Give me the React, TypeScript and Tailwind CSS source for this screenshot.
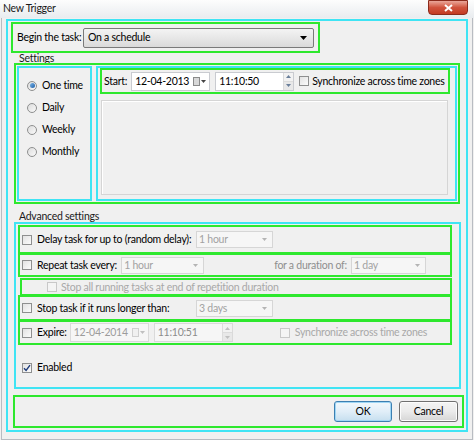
import * as React from 'react'

const GREEN = 'border-[#2ee82e]'
const CYAN = 'border-[#3fe4f4]'

function Check({ checked = false, disabled = false }: { checked?: boolean; disabled?: boolean }) {
  return (
    <div
      className={`w-[10px] h-[10px] shrink-0 border flex items-center justify-center ${
        disabled ? 'border-[#c8c8c8] bg-[#f4f4f4]' : 'border-[#8e8f8f] bg-gradient-to-br from-[#e2e2e2] to-[#fbfbfb]'
      }`}
    >
      {checked && (
        <svg width="8" height="8" viewBox="0 0 8 8">
          <path d="M1 4.2 L3.1 6.5 L7 1.2" fill="none" stroke="#1d3a7a" strokeWidth="1.4" />
        </svg>
      )}
    </div>
  )
}

function Radio({ checked = false }: { checked?: boolean }) {
  return (
    <div className="w-[10px] h-[10px] shrink-0 rounded-full border border-[#8e8f8f] bg-gradient-to-br from-[#dcdcdc] to-[#fafafa] flex items-center justify-center">
      {checked && <div className="w-[5px] h-[5px] rounded-full bg-gradient-to-br from-[#7ab6e8] to-[#1d5fa8]" />}
    </div>
  )
}

function DisabledSelect({ value, w }: { value: string; w: string }) {
  return (
    <div className={`${w} h-[17px] border border-[#d6d6d6] bg-[#f6f6f6] flex items-center pl-[2px] text-[#a2a2a2]`}>
      <span>{value}</span>
      <svg className="ml-auto mr-[5px]" width="5" height="3" viewBox="0 0 5 3">
        <path d="M0 0 H5 L2.5 3 Z" fill="#b4b4b4" />
      </svg>
    </div>
  )
}

function DateBox({ value, disabled = false }: { value: string; disabled?: boolean }) {
  return (
    <div
      className={`w-[79px] h-[19px] shrink-0 border flex items-center pl-[3px] ${
        disabled ? 'border-[#dadada] bg-[#f6f6f6] text-[#9c9c9c]' : 'border-[#c9cbd0] bg-white text-black'
      }`}
    >
      <span>{value}</span>
      <div className="ml-auto mr-[3px] flex items-center gap-[1px]">
        <div className={`w-[7px] h-[9px] border ${disabled ? 'border-[#cfcfcf] bg-[#f0f0f0]' : 'border-[#8a8a8a] bg-[#d8d8d8]'}`} />
        <svg width="5" height="3" viewBox="0 0 5 3">
          <path d="M0 0 H5 L2.5 3 Z" fill={disabled ? '#c0c0c0' : '#444'} />
        </svg>
      </div>
    </div>
  )
}

function TimeBox({ value, disabled = false }: { value: string; disabled?: boolean }) {
  return (
    <div
      className={`w-[79px] h-[19px] shrink-0 border flex items-center pl-[3px] ${
        disabled ? 'border-[#dadada] bg-[#f6f6f6] text-[#8c8c8c]' : 'border-[#c9cbd0] bg-white text-black'
      }`}
    >
      <span>{value}</span>
      <div className="ml-auto h-full w-[10px] border-l border-[#dcdcdc] flex flex-col">
        <div className="flex-1 flex items-center justify-center bg-[#f2f2f2]">
          <svg width="5" height="3" viewBox="0 0 5 3">
            <path d="M0 3 H5 L2.5 0 Z" fill={disabled ? '#c0c0c0' : '#6a7f9a'} />
          </svg>
        </div>
        <div className="flex-1 flex items-center justify-center bg-[#e8e8e8] border-t border-[#dcdcdc]">
          <svg width="5" height="3" viewBox="0 0 5 3">
            <path d="M0 0 H5 L2.5 3 Z" fill={disabled ? '#c0c0c0' : '#6a7f9a'} />
          </svg>
        </div>
      </div>
    </div>
  )
}

export default function App() {
  return (
    <div className="w-[474px] h-[440px] bg-[#f0f0f0] overflow-hidden flex flex-col whitespace-nowrap text-[10.5px] tracking-[-0.25px] leading-[13px] text-black font-['Lato',sans-serif]">
      {/* title bar */}
      <div className="h-[18px] shrink-0 flex items-start bg-gradient-to-b from-[#fdfdfd] to-[#e9ecef]">
        <span className="ml-[3px] mt-[2px] text-[#1a1a1a]">New Trigger</span>
        <div className="ml-auto mr-[6px] w-[40px] h-[15px] rounded-b-[4px] border border-[#8b2b1c] bg-gradient-to-b from-[#e9a699] via-[#d0533d] to-[#c43a22] flex items-center justify-center">
          <svg width="9" height="8" viewBox="0 0 9 8">
            <path d="M1 1 L8 7 M8 1 L1 7" stroke="white" strokeWidth="2" />
          </svg>
        </div>
      </div>

      <div className="flex-1 px-[3px] pb-[6px] border-l border-r border-b border-[#b8bcc2] mx-[1px] flex flex-col">
        <div className={`mt-[1px] ml-[1px] w-[462px] h-[413px] border-2 ${CYAN} flex flex-col`}>
          {/* begin the task */}
          <div className={`ml-[3px] mt-[1px] w-[309px] h-[31px] shrink-0 border-2 ${GREEN} flex items-center pl-[4px]`}>
            <span>Begin the task:</span>
            <div className="ml-auto mr-[4px] w-[231px] h-[20px] rounded-[2px] border border-[#7a7a7a] bg-gradient-to-b from-[#f4f4f4] to-[#dadada] flex items-center pl-[4px]">
              <span>On a schedule</span>
              <svg className="ml-auto mr-[6px]" width="7" height="4" viewBox="0 0 7 4">
                <path d="M0 0 H7 L3.5 4 Z" fill="#000" />
              </svg>
            </div>
          </div>

          <div className="ml-[11px] h-[9px] leading-[9px] mt-[1px] text-[#1a1a1a]">Settings</div>

          {/* settings */}
          <div className={`ml-[6px] w-[446px] h-[141px] shrink-0 border-2 ${GREEN} p-[1px] flex gap-[4px]`}>
            <div className={`w-[75px] h-full border-2 ${CYAN} flex flex-col pl-[8px] pt-[12px] gap-[11px]`}>
              {['One time', 'Daily', 'Weekly', 'Monthly'].map((t, i) => (
                <div key={t} className="flex items-center gap-[5px] h-[11px]">
                  <Radio checked={i === 0} />
                  <span>{t}</span>
                </div>
              ))}
            </div>
            <div className={`flex-1 h-full border-2 ${CYAN} flex flex-col`}>
              <div className={`ml-[2px] w-[350px] h-[26px] border-2 ${GREEN} flex items-center pl-[2px]`}>
                <span>Start:</span>
                <div className="ml-[4px]">
                  <DateBox value="12-04-2013" />
                </div>
                <div className="ml-[5px]">
                  <TimeBox value="11:10:50" />
                </div>
                <div className="ml-[5px]">
                  <Check />
                </div>
                <span className="ml-[3px]">Synchronize across time zones</span>
              </div>
              <div className="ml-[3px] mt-[6px] w-[347px] h-[95px] border border-[#d5d5d5] shadow-[inset_1px_1px_0_#ffffff]" />
            </div>
          </div>

          <div className="ml-[11px] h-[11px] leading-[11px] mt-[7px] text-[#1a1a1a]">Advanced settings</div>

          {/* advanced */}
          <div className={`ml-[6px] w-[447px] h-[167px] shrink-0 border-2 ${CYAN} flex flex-col pt-[1px]`}>
            <div className={`ml-[2px] w-[434px] h-[29px] border-2 ${GREEN} flex items-center pl-[2px]`}>
              <Check />
              <span className="ml-[5px]">Delay task for up to (random delay):</span>
              <div className="ml-auto mr-[177px]">
                <DisabledSelect value="1 hour" w="w-[77px]" />
              </div>
            </div>
            <div className={`ml-[2px] -mt-[1px] w-[434px] h-[24px] border-2 ${GREEN} flex items-center pl-[2px]`}>
              <Check />
              <span className="ml-[5px]">Repeat task every:</span>
              <div className="ml-auto mr-[247px]">
                <DisabledSelect value="1 hour" w="w-[83px]" />
              </div>
              <span className="text-[#8e8e8e] -ml-[177px]">for a duration of:</span>
              <div className="ml-auto mr-[24px]">
                <DisabledSelect value="1 day" w="w-[75px]" />
              </div>
            </div>
            <div className={`ml-[4px] mt-[1px] w-[432px] h-[18px] border-2 ${GREEN} flex items-center pl-[25px]`}>
              <Check disabled />
              <span className="ml-[4px] text-[#a8a8a8]">Stop all running tasks at end of repetition duration</span>
            </div>
            <div className={`ml-[2px] -mt-[1px] w-[434px] h-[26px] border-2 ${GREEN} flex items-center pl-[2px]`}>
              <Check />
              <span className="ml-[5px]">Stop task if it runs longer than:</span>
              <div className="ml-auto mr-[177px]">
                <DisabledSelect value="3 days" w="w-[77px]" />
              </div>
            </div>
            <div className={`ml-[2px] -mt-[1px] w-[434px] h-[25px] border-2 ${GREEN} flex items-center pl-[2px]`}>
              <Check />
              <span className="ml-[5px]">Expire:</span>
              <div className="ml-[3px]">
                <DateBox value="12-04-2014" disabled />
              </div>
              <div className="ml-[5px]">
                <TimeBox value="11:10:51" disabled />
              </div>
              <div className="ml-[47px]">
                <Check disabled />
              </div>
              <span className="ml-[5px] text-[#a8a8a8]">Synchronize across time zones</span>
            </div>
            <div className="ml-[6px] mt-[16px] flex items-center">
              <Check checked />
              <span className="ml-[5px]">Enabled</span>
            </div>
          </div>

          {/* buttons */}
          <div className={`ml-[5px] mt-[6px] w-[451px] h-[33px] shrink-0 border-2 ${GREEN} flex items-center justify-end gap-[7px] pr-[4px]`}>
            <button className="w-[58px] h-[21px] rounded-[3px] border border-[#3c7fb1] bg-gradient-to-b from-[#f2f8fc] via-[#e1eef8] to-[#c6dfef] shadow-[inset_0_0_0_1px_#9fd6f5]">
              OK
            </button>
            <button className="w-[59px] h-[21px] rounded-[3px] border border-[#707070] bg-gradient-to-b from-[#f4f4f4] via-[#ebebeb] to-[#d6d6d6] shadow-[inset_0_0_0_1px_#fcfcfc]">
              Cancel
            </button>
          </div>
        </div>
      </div>
    </div>
  )
}
